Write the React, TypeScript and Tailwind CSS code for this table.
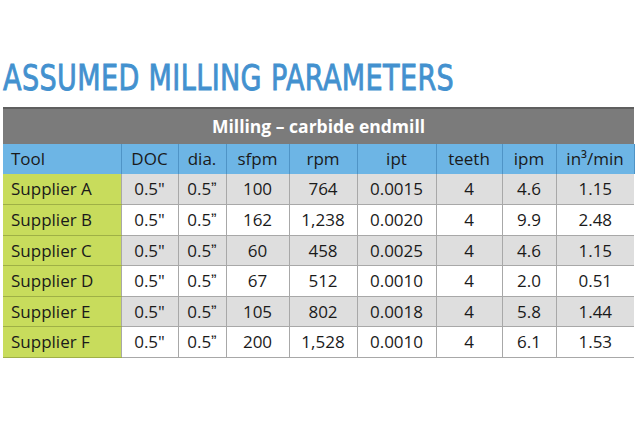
const cols = [
  { key: "tool", label: "Tool", w: 118 },
  { key: "doc", label: "DOC", w: 57 },
  { key: "dia", label: "dia.", w: 48 },
  { key: "sfpm", label: "sfpm", w: 63 },
  { key: "rpm", label: "rpm", w: 68 },
  { key: "ipt", label: "ipt", w: 79 },
  { key: "teeth", label: "teeth", w: 66 },
  { key: "ipm", label: "ipm", w: 54 },
  { key: "vol", label: "in³/min", w: 78 },
]

const rows = [
  ["Supplier A", "0.5\"", "0.5\u02ee", "100", "764", "0.0015", "4", "4.6", "1.15"],
  ["Supplier B", "0.5\"", "0.5\u02ee", "162", "1,238", "0.0020", "4", "9.9", "2.48"],
  ["Supplier C", "0.5\"", "0.5\u02ee", "60", "458", "0.0025", "4", "4.6", "1.15"],
  ["Supplier D", "0.5\"", "0.5\u02ee", "67", "512", "0.0010", "4", "2.0", "0.51"],
  ["Supplier E", "0.5\"", "0.5\u02ee", "105", "802", "0.0018", "4", "5.8", "1.44"],
  ["Supplier F", "0.5\"", "0.5\u02ee", "200", "1,528", "0.0010", "4", "6.1", "1.53"],
]

export default function App() {
  return (
    <div className="w-[635px] h-[424px] bg-white overflow-hidden font-['Open_Sans',sans-serif] pt-[58px] pl-[3px]">
      <h1 className="h-[40px] text-[35px] leading-[40px] font-normal font-['DejaVu_Sans',sans-serif] tracking-[0.5px] text-[#4391cf] [-webkit-text-stroke:0.9px_#4391cf] [transform:scaleX(0.773)] [transform-origin:left_center] whitespace-nowrap">
        ASSUMED MILLING PARAMETERS
      </h1>
      <table className="mt-[9px] border-collapse table-fixed w-[631px] text-[#1a1a1a]">
        <colgroup>
          {cols.map((c) => (
            <col key={c.key} style={{ width: c.w }} />
          ))}
        </colgroup>
        <thead>
          <tr className="h-[36px] bg-[#7b7b7b] border-t-2 border-[#5f5f5f]">
            <th colSpan={9} className="text-white text-[17.5px] font-bold pt-[4px] align-top">
              Milling – carbide endmill
            </th>
          </tr>
          <tr className="h-[30px] bg-[#6db5e5]">
            {cols.map((c, i) => (
              <th
                key={c.key}
                className={`font-normal text-[17px] border-x border-[#4f94c6] ${i === 0 ? "text-left pl-[8px] border-l-0" : "text-center"}`}
              >
                {c.label}
              </th>
            ))}
          </tr>
        </thead>
        <tbody>
          {rows.map((r, ri) => (
            <tr key={ri} className={`h-[30.5px] ${ri % 2 === 0 ? "bg-[#dedede]" : "bg-white"} border-b border-[#a8a8a8]`}>
              {r.map((v, ci) => (
                <td
                  key={ci}
                  className={
                    ci === 0
                      ? "bg-[#c8dc5c] text-left pl-[8px] text-[17px] border-b border-[#9fb046]"
                      : "text-center text-[17px] border-l border-[#a8a8a8]"
                  }
                >
                  {v}
                </td>
              ))}
            </tr>
          ))}
        </tbody>
      </table>
    </div>
  )
}
